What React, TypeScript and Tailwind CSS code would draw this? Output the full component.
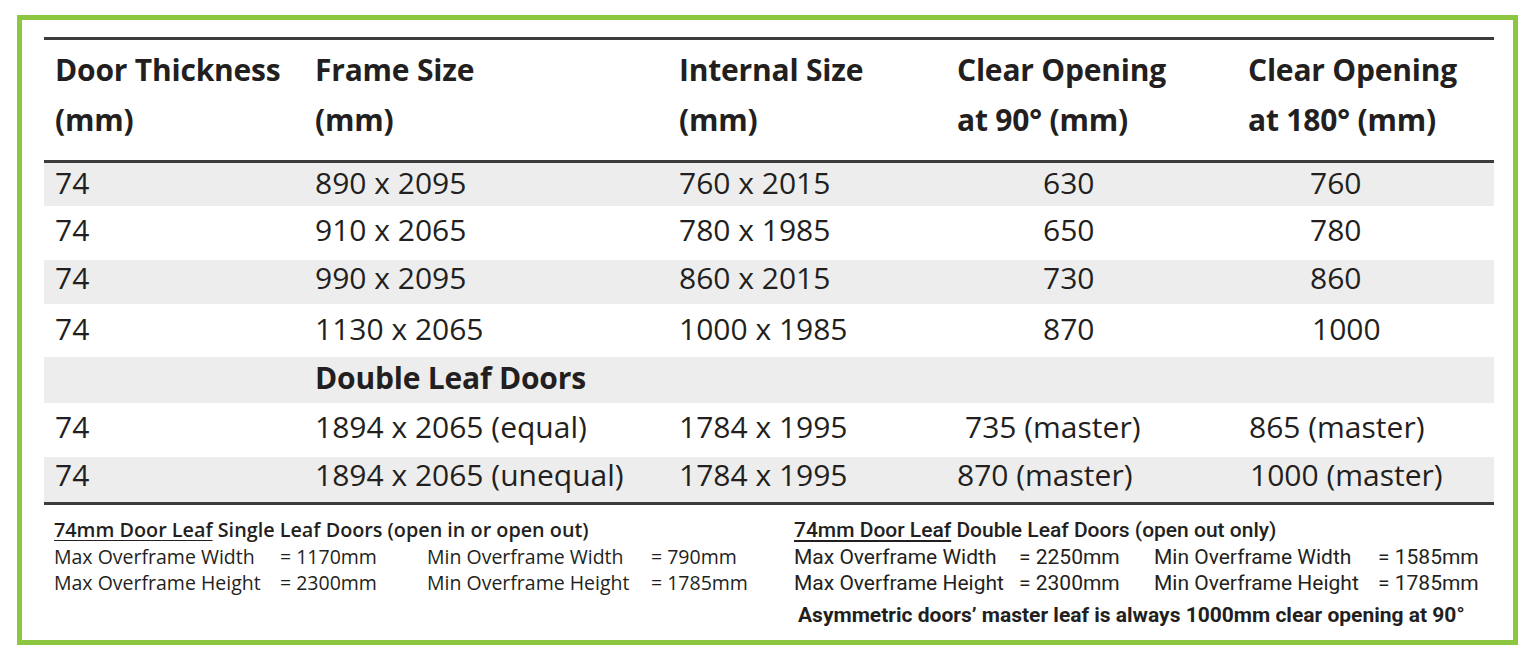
import React from "react";

const F = { fontFamily: '"Open Sans", "Noto Sans", sans-serif' };
const R = { fontFamily: 'Roboto, "Open Sans", sans-serif' };

type Row = {
  grey: boolean;
  h: string;
  pt: string;
  cells: [string, string, string, string, string];
  off4: string;
  off5: string;
  special?: boolean;
};

const rows: Row[] = [
  { grey: true, h: "h-[43px]", pt: "pt-[4px]", cells: ["74", "890 x 2095", "760 x 2015", "630", "760"], off4: "pl-[86px]", off5: "pl-[62px]" },
  { grey: false, h: "h-[54px]", pt: "pt-[8px]", cells: ["74", "910 x 2065", "780 x 1985", "650", "780"], off4: "pl-[86px]", off5: "pl-[62px]" },
  { grey: true, h: "h-[44px]", pt: "pt-[2px]", cells: ["74", "990 x 2095", "860 x 2015", "730", "860"], off4: "pl-[86px]", off5: "pl-[62px]" },
  { grey: false, h: "h-[53px]", pt: "pt-[9px]", cells: ["74", "1130 x 2065", "1000 x 1985", "870", "1000"], off4: "pl-[86px]", off5: "pl-[64px]" },
  { grey: true, h: "h-[46px]", pt: "pt-[5px]", cells: ["", "Double Leaf Doors", "", "", ""], off4: "", off5: "", special: true },
  { grey: false, h: "h-[54px]", pt: "pt-[8px]", cells: ["74", "1894 x 2065 (equal)", "1784 x 1995", "735 (master)", "865 (master)"], off4: "pl-[8px]", off5: "pl-[1px]" },
  { grey: true, h: "h-[45px]", pt: "pt-[2px]", cells: ["74", "1894 x 2065 (unequal)", "1784 x 1995", "870 (master)", "1000 (master)"], off4: "pl-[0px]", off5: "pl-[2px]" },
];

const cols = "grid grid-cols-[271px_364px_278px_291px_246px]";

function Header() {
  const h = [
    ["Door Thickness", "(mm)"],
    ["Frame Size", "(mm)"],
    ["Internal Size", "(mm)"],
    ["Clear Opening", "at 90° (mm)"],
    ["Clear Opening", "at 180° (mm)"],
  ];
  return (
    <div className={`${cols} h-[126px] pt-[5px] border-t-[3px] border-b-[3px] border-[#3c3c3c]`}>
      {h.map((c, i) => (
        <div
          key={i}
          className={`text-[30px] leading-[50px] font-bold tracking-[-0.2px] text-[#231f20] whitespace-nowrap ${i === 0 ? "pl-[11px]" : ""}`}
        >
          <div>{c[0]}</div>
          <div>{c[1]}</div>
        </div>
      ))}
    </div>
  );
}

function FootRow({ a, b, c, d, w }: { a: string; b: string; c: string; d: string; w: string[] }) {
  return (
    <div className="flex whitespace-nowrap">
      <span className={w[0]}>{a}</span>
      <span className={w[1]}>{b}</span>
      <span className={w[2]}>{c}</span>
      <span>{d}</span>
    </div>
  );
}

export default function App() {
  return (
    <div className="w-[1536px] h-[660px] bg-white pt-[15px] pl-[17px]" style={F}>
      <div className="w-[1501px] h-[630px] border-[5px] border-[#8dc63f] pt-[17px] pl-[22px]">
        <div className="w-[1450px]">
          <Header />
          {rows.map((r, i) => (
            <div key={i} className={`${cols} ${r.h} ${r.pt} ${r.grey ? "bg-[#ededed]" : "bg-white"}`}>
              <div className="pl-[11px] text-[30px] leading-[32px] text-[#231f20]">{r.cells[0]}</div>
              <div className={`text-[30px] leading-[32px] text-[#231f20] whitespace-nowrap ${r.special ? "font-bold tracking-[-0.2px]" : ""}`}>
                {r.cells[1]}
              </div>
              <div className="text-[30px] leading-[32px] text-[#231f20] whitespace-nowrap">{r.cells[2]}</div>
              <div className={`text-[30px] leading-[32px] text-[#231f20] whitespace-nowrap ${r.off4}`}>{r.cells[3]}</div>
              <div className={`text-[30px] leading-[32px] text-[#231f20] whitespace-nowrap ${r.off5}`}>{r.cells[4]}</div>
            </div>
          ))}
          <div className="border-t-[3px] border-[#3c3c3c]" />
          <div className="flex pt-[12px] text-[#231f20]">
            <div className="w-[750px] pl-[10px] text-[19.5px] leading-[26.5px]">
              <div className="font-semibold whitespace-nowrap text-[19.8px]">
                <span className="underline underline-offset-[3px]">74mm Door Leaf</span> Single Leaf Doors (open in or open out)
              </div>
              <FootRow a="Max Overframe Width" b="= 1170mm" c="Min Overframe Width" d="= 790mm" w={["w-[226px]", "w-[147px]", "w-[224px]"]} />
              <FootRow a="Max Overframe Height" b="= 2300mm" c="Min Overframe Height" d="= 1785mm" w={["w-[226px]", "w-[147px]", "w-[224px]"]} />
            </div>
            <div className="w-[690px] text-[21px] leading-[26.5px]" style={R}>
              <div className="font-medium whitespace-nowrap">
                <span className="underline underline-offset-[3px]">74mm Door Leaf</span> Double Leaf Doors (open out only)
              </div>
              <FootRow a="Max Overframe Width" b="= 2250mm" c="Min Overframe Width" d="= 1585mm" w={["w-[225px]", "w-[135px]", "w-[224px]"]} />
              <FootRow a="Max Overframe Height" b="= 2300mm" c="Min Overframe Height" d="= 1785mm" w={["w-[225px]", "w-[135px]", "w-[224px]"]} />
              <div className="font-bold whitespace-nowrap pl-[4px] pt-[5px]">
                Asymmetric doors’ master leaf is always 1000mm clear opening at 90°
              </div>
            </div>
          </div>
        </div>
      </div>
    </div>
  );
}
